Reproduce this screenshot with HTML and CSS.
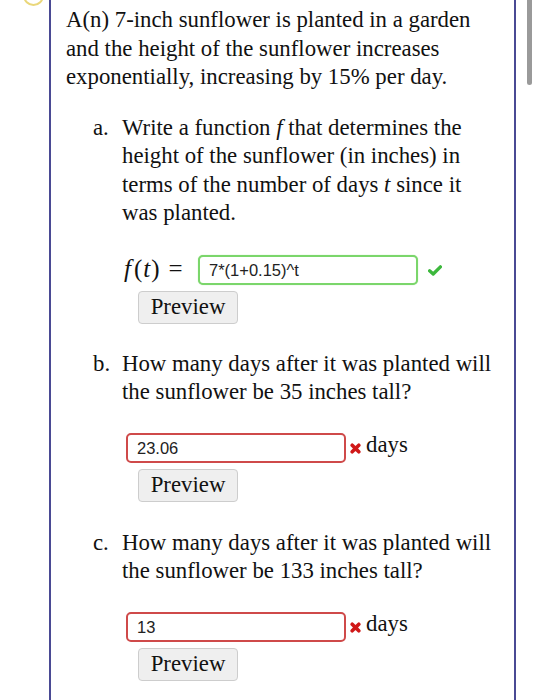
FILE: index.html
```html
<!DOCTYPE html>
<html>
<head>
<meta charset="utf-8">
<link rel="stylesheet" href="styles.css">
</head>
<body>
<div class="screen">
  <span class="ring"></span>
  <span class="scrollbar"></span>
  <div class="card">
    <p class="intro">A(n) 7-inch sunflower is planted in a garden and the height of the sunflower increases exponentially, increasing by 15% per day.</p>
    <div class="parts">
      <div class="part part-a">
        <span class="marker">a.</span>
        <div class="body">
          <p class="q">Write a function <i class="mi">f</i> that determines the height of the sunflower (in inches) in terms of the number of days <i class="mi">t</i> since it was planted.</p>
          <div class="answer">
            <span class="math"><i class="mf">f</i><span class="paren">(</span><i class="mt">t</i><span class="paren">)</span><span class="eq">=</span></span>
            <span class="field ok">7*(1+0.15)^t</span>
            <svg class="check" width="14" height="11" viewBox="0 0 14 11"><path d="M1.6 5.8 L5.2 9 L12.4 1.8" fill="none" stroke="#3cb83c" stroke-width="3.3" stroke-linecap="round" stroke-linejoin="round"/></svg>
          </div>
          <button class="preview">Preview</button>
        </div>
      </div>
      <div class="part part-b">
        <span class="marker">b.</span>
        <div class="body">
          <p class="q">How many days after it was planted will the sunflower be 35 inches tall?</p>
          <div class="answer unit">
            <span class="field bad">23.06</span>
            <svg class="cross" width="11" height="11" viewBox="0 0 11 11"><path d="M2.2 2.2 L8.8 8.8 M8.8 2.2 L2.2 8.8" stroke="#d01818" stroke-width="3.6" stroke-linecap="round"/></svg>
            <span class="days">days</span>
          </div>
          <button class="preview">Preview</button>
        </div>
      </div>
      <div class="part part-c">
        <span class="marker">c.</span>
        <div class="body">
          <p class="q">How many days after it was planted will the sunflower be 133 inches tall?</p>
          <div class="answer unit">
            <span class="field bad">13</span>
            <svg class="cross" width="11" height="11" viewBox="0 0 11 11"><path d="M2.2 2.2 L8.8 8.8 M8.8 2.2 L2.2 8.8" stroke="#d01818" stroke-width="3.6" stroke-linecap="round"/></svg>
            <span class="days">days</span>
          </div>
          <button class="preview">Preview</button>
        </div>
      </div>
    </div>
  </div>
</div>
</body>
</html>
```
FILE: styles.css
```css
html, body {
  margin: 0;
  padding: 0;
  background: #ffffff;
}
.screen {
  position: relative;
  width: 538px;
  height: 700px;
  overflow: hidden;
  font-family: "Liberation Serif", "Times New Roman", serif;
  color: #111111;
}
.ring {
  position: absolute;
  left: 23px;
  top: -15px;
  width: 17px;
  height: 17px;
  border: 2.5px solid #ead77a;
  border-radius: 50%;
}
.scrollbar {
  position: absolute;
  left: 527px;
  top: -6px;
  width: 5px;
  height: 91px;
  border-radius: 3px;
  background: #9a9a9a;
}
.card {
  margin-left: 49px;
  width: 432px;
  height: 700px;
  border-left: 2px solid #4a4a94;
  border-right: 2px solid #4a4a94;
  padding: 6px 16px 0 15px;
}
.intro {
  margin: 0;
  font-size: 22.8px;
  line-height: 28.5px;
}
.parts {
  margin-top: 22px;
  padding-left: 29px;
}
.part {
  display: flex;
  font-size: 22.8px;
  line-height: 28.5px;
}
.marker {
  width: 29px;
  flex: none;
  margin-left: -2px;
}
.body {
  flex: 1;
}
.q {
  margin: 0;
}
.mi {
  font-style: italic;
}
.answer {
  display: flex;
  align-items: center;
  height: 30px;
  margin-top: 27px;
}
.unit {
  margin-top: 26px;
  margin-left: 4px;
}
.math {
  font-size: 25px;
  width: 75px;
  flex: none;
  display: flex;
  align-items: baseline;
  margin-left: 1px;
}
.mf {
  padding: 0 3px 0 1px;
}
.mt {
  padding: 0 1px 0 1px;
}
.eq {
  margin-left: 9px;
}
.field {
  box-sizing: border-box;
  width: 220px;
  height: 30px;
  border: 2px solid;
  border-radius: 5px;
  padding: 0 9px;
  font-family: "Liberation Sans", Arial, sans-serif;
  font-size: 16.5px;
  line-height: 26px;
  color: #222;
  background: #fff;
}
.ok {
  border-color: #7bd66b;
  box-shadow: 0 0 1px #9be08e;
}
.bad {
  border-color: #cf4a4a;
}
.check {
  margin-left: 10px;
  margin-top: 2px;
}
.cross {
  margin-left: 4px;
  margin-top: 1px;
}
.days {
  margin-left: 5px;
  margin-top: -4px;
}
.preview {
  display: block;
  margin: 6px 0 0 16px;
  width: 100px;
  height: 33px;
  padding: 0;
  font-family: "Liberation Serif", "Times New Roman", serif;
  font-size: 22.8px;
  color: #111111;
  background: #efefef;
  border: 1px solid #cdcdcd;
  border-radius: 4px;
}
.part-b {
  margin-top: 26px;
}
.part-c {
  margin-top: 27px;
}
```
